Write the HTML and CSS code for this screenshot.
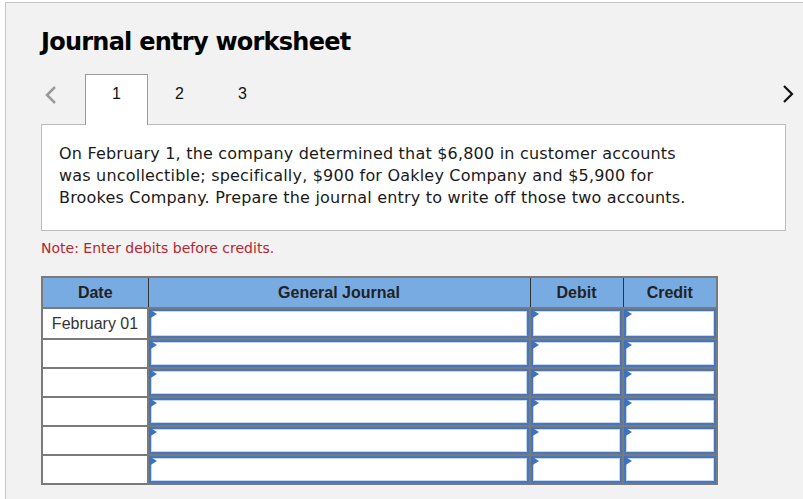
FILE: index.html
```html
<!DOCTYPE html>
<html lang="en">
<head>
    <meta charset="UTF-8">
    <title>Journal entry worksheet</title>
    <link rel="stylesheet" href="styles.css">
</head>
<body>
    <div class="frame">
        <h1 class="title">Journal entry worksheet</h1>

        <div class="tabs">
            <span class="nav prev">
                <svg width="14" height="20" viewBox="0 0 14 20"><path d="M11 2 L3 10 L11 18" fill="none" stroke="#9a9a9a" stroke-width="2.5"/></svg>
            </span>
            <div class="tab active">1</div>
            <div class="tab">2</div>
            <div class="tab">3</div>
            <span class="nav next">
                <svg width="12" height="20" viewBox="0 0 12 20"><path d="M2 2 L10 10 L2 18" fill="none" stroke="#111" stroke-width="2.2"/></svg>
            </span>
        </div>

        <div class="prompt">
            <p>On February 1, the company determined that $6,800 in customer accounts was uncollectible; specifically, $900 for Oakley Company and $5,900 for Brookes Company. Prepare the journal entry to write off those two accounts.</p>
        </div>

        <p class="note">Note: Enter debits before credits.</p>

        <table class="journal">
            <colgroup>
                <col class="c-date">
                <col class="c-account">
                <col class="c-debit">
                <col class="c-credit">
            </colgroup>
            <thead>
                <tr>
                    <th>Date</th>
                    <th>General Journal</th>
                    <th>Debit</th>
                    <th>Credit</th>
                </tr>
            </thead>
            <tbody>
                <tr class="first">
                    <td class="date">February 01</td>
                    <td class="entry"><div class="field"></div></td>
                    <td class="entry"><div class="field"></div></td>
                    <td class="entry"><div class="field"></div></td>
                </tr>
                <tr>
                    <td class="date"></td>
                    <td class="entry"><div class="field"></div></td>
                    <td class="entry"><div class="field"></div></td>
                    <td class="entry"><div class="field"></div></td>
                </tr>
                <tr>
                    <td class="date"></td>
                    <td class="entry"><div class="field"></div></td>
                    <td class="entry"><div class="field"></div></td>
                    <td class="entry"><div class="field"></div></td>
                </tr>
                <tr>
                    <td class="date"></td>
                    <td class="entry"><div class="field"></div></td>
                    <td class="entry"><div class="field"></div></td>
                    <td class="entry"><div class="field"></div></td>
                </tr>
                <tr>
                    <td class="date"></td>
                    <td class="entry"><div class="field"></div></td>
                    <td class="entry"><div class="field"></div></td>
                    <td class="entry"><div class="field"></div></td>
                </tr>
                <tr>
                    <td class="date"></td>
                    <td class="entry"><div class="field"></div></td>
                    <td class="entry"><div class="field"></div></td>
                    <td class="entry"><div class="field"></div></td>
                </tr>
            </tbody>
        </table>
    </div>
</body>
</html>
```

FILE: styles.css
```css
html, body {
    margin: 0;
    padding: 0;
    background: #fff;
    overflow: hidden;
}
body {
    font-family: "DejaVu Sans", Verdana, sans-serif;
    color: #1a1a1a;
}
.frame {
    margin: 2px 0 0 5px;
    padding: 0 0 0 35px;
    height: calc(100vh - 2px);
    box-sizing: border-box;
    overflow: hidden;
    background: #f2f2f2;
    border-top: 1px solid #c6c6c6;
    border-left: 1px solid #c6c6c6;
}
.title {
    margin: 0;
    padding-top: 24px;
    font-size: 24px;
    line-height: 30px;
    font-weight: bold;
    letter-spacing: -0.75px;
    color: #000;
}
.tabs {
    display: flex;
    align-items: flex-start;
    width: 755px;
    height: 50px;
    margin-top: 17px;
    font-family: "Liberation Sans", Arial, sans-serif;
    font-size: 16px;
}
.nav {
    display: flex;
}
.prev {
    width: 44px;
    padding: 11px 0 0 3px;
    box-sizing: border-box;
}
.next {
    margin-left: auto;
    padding: 10px 2px 0 0;
}
.tab {
    width: 63px;
    height: 51px;
    box-sizing: border-box;
    padding-top: 10px;
    line-height: 20px;
    text-align: center;
    color: #111;
}
.tab.active {
    position: relative;
    z-index: 1;
    background: #fff;
    border: 1px solid #9a9a9a;
    border-bottom: none;
    padding-top: 9px;
}
.prompt {
    width: 745px;
    box-sizing: border-box;
    background: #fff;
    border: 1px solid #bcbcbc;
    padding: 18px 80px 21px 17px;
}
.prompt p {
    margin: 0;
    font-size: 16px;
    line-height: 22px;
    letter-spacing: 0.2px;
}
.note {
    margin: 8px 0 19px;
    font-size: 14px;
    line-height: 18px;
    color: #b4262f;
}
.journal {
    border-collapse: collapse;
    width: 676px;
    table-layout: fixed;
    font-family: "Liberation Sans", Arial, sans-serif;
    font-size: 16px;
    background: #fff;
    border: 2px solid #7a7a7a;
}
.c-date { width: 106px; }
.c-account { width: 382px; }
.c-debit { width: 93px; }
.c-credit { width: 94px; }
.journal th {
    height: 29px;
    padding: 0;
    background: #79abe3;
    color: #222;
    font-weight: bold;
    border: 1px solid #333;
    border-top: 2px solid #7a7a7a;
}
.journal th:first-child { border-left: 2px solid #7a7a7a; }
.journal th:last-child { border-right: 2px solid #7a7a7a; }
.journal td {
    padding: 0;
    border: 2px solid #7a7a7a;
}
.date {
    text-align: center;
    color: #333;
}
.entry {
    position: relative;
}
.entry::before {
    content: "";
    position: absolute;
    top: 0;
    left: 0;
    border-left: 8px solid #3c72c0;
    border-top: 5px solid transparent;
    border-bottom: 5px solid transparent;
}
.field {
    height: 27px;
    box-sizing: border-box;
    border: 2px solid #4677bd;
    box-shadow: inset 0 0 0 1px #c5d7ef;
    background: #fff;
}
.first .field {
    height: 29px;
}
```
